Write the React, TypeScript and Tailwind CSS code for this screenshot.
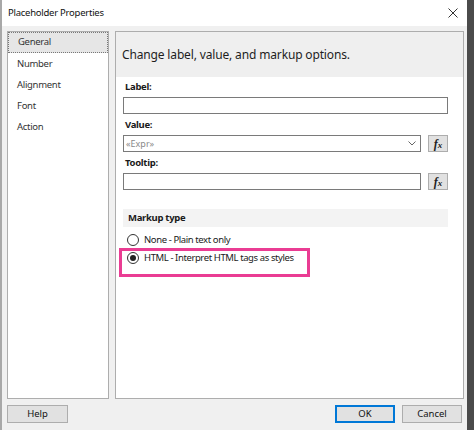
import React from 'react';

const font = { fontFamily: '"Noto Sans", "Open Sans", sans-serif' };

const navItems = ['General', 'Number', 'Alignment', 'Font', 'Action'];

const FxButton: React.FC = () => (
  <button className="ml-[7px] w-[20px] h-[17px] bg-[#e1e1e1] border border-[#adadad] flex items-center justify-center">
    <span className="text-[12px] leading-none italic font-bold text-[#222]" style={{ fontFamily: '"Liberation Serif", serif' }}>
      f<span className="text-[9px]">x</span>
    </span>
  </button>
);

const Radio: React.FC<{ checked?: boolean; label: string }> = ({ checked, label }) => (
  <div className="h-[18px] flex items-center pl-[4px]">
    <span className="w-[12px] h-[12px] rounded-full border border-[#333] bg-white flex items-center justify-center">
      {checked && <span className="w-[6px] h-[6px] rounded-full bg-[#222]" />}
    </span>
    <span className="ml-[5px] text-[9.5px] tracking-[-0.4px] text-[#1a1a1a]">{label}</span>
  </div>
);

const App: React.FC = () => {
  return (
    <div className="w-[474px] h-[430px] flex overflow-hidden" style={font}>
      {/* window frame */}
      <div className="w-[2px] bg-[#a8a8a8]" />
      <div className="flex-1 flex flex-col">
        {/* Title bar */}
        <div className="h-[26px] bg-white flex items-center justify-between pl-[6px] pr-[8px]">
          <span className="text-[9.5px] tracking-[-0.25px] text-[#111]">Placeholder Properties</span>
          <svg width="10" height="10" viewBox="0 0 10 10" className="mr-[1px]">
            <path d="M0.5 0.5 L9.5 9.5 M9.5 0.5 L0.5 9.5" stroke="#333" strokeWidth="1" />
          </svg>
        </div>

        {/* Body */}
        <div className="flex-1 bg-[#f0f0f0] flex flex-col pl-[5px] pr-[3px] pt-[5px]">
          <div className="h-[368px] flex gap-[6px]">
            {/* Left nav */}
            <div className="w-[102px] bg-white border border-[#adadad] flex flex-col">
              {navItems.map((item, i) => (
                <div
                  key={item}
                  className={`h-[21px] flex items-center pl-[9px] text-[9.5px] tracking-[-0.3px] text-[#333] ${
                    i === 0 ? 'h-[20px] bg-[#e6e6e6] border border-dotted border-[#777] pl-[8px] mb-[1px]' : ''
                  }`}
                >
                  {item}
                </div>
              ))}
            </div>

            {/* Right panel */}
            <div className="flex-1 bg-white border border-[#adadad] flex flex-col">
              <div className="h-[45px] bg-[#efefef] flex items-center pl-[6px]">
                <span className="text-[12px] tracking-[-0.15px] text-[#1e1e1e]">Change label, value, and markup options.</span>
              </div>

              <div className="relative pl-[7px] pr-[15px] flex flex-col">
                <div className="mt-[3px] h-[14px] leading-[14px] text-[9.5px] tracking-[-0.3px] font-bold text-[#1a1a1a] pl-[2px]">Label:</div>
                <div className="mt-[3px] h-[17px] border border-[#7a7a7a] bg-white" />

                <div className="mt-[4px] h-[14px] leading-[14px] text-[9.5px] tracking-[-0.3px] font-bold text-[#1a1a1a] pl-[2px]">Value:</div>
                <div className="mt-[3px] flex">
                  <div className="flex-1 h-[17px] border border-[#7a7a7a] bg-white flex items-center justify-between pl-[2px] pr-[4px]">
                    <span className="text-[9px] text-[#8a8a8a]">«Expr»</span>
                    <svg width="8" height="5" viewBox="0 0 8 5">
                      <path d="M0.5 0.5 L4 4 L7.5 0.5" stroke="#666" strokeWidth="1" fill="none" />
                    </svg>
                  </div>
                  <FxButton />
                </div>

                <div className="mt-[4px] h-[14px] leading-[14px] text-[9.5px] tracking-[-0.3px] font-bold text-[#1a1a1a] pl-[2px]">Tooltip:</div>
                <div className="mt-[3px] flex">
                  <div className="flex-1 h-[17px] border border-[#7a7a7a] bg-white" />
                  <FxButton />
                </div>

                <div className="mt-[19px] h-[18px] bg-[#f3f3f3] flex items-center pl-[5px]">
                  <span className="text-[9.5px] tracking-[-0.3px] font-bold text-[#1a1a1a]">Markup type</span>
                </div>

                <div className="mt-[4px] flex flex-col">
                  <Radio label="None - Plain text only" />
                  <Radio checked label="HTML - Interpret HTML tags as styles" />
                </div>

                {/* highlight annotation */}
                <div className="absolute left-[3px] top-[171px] w-[191px] h-[29px] border-[3px] border-[#ea3c93]" />
              </div>
            </div>
          </div>

          {/* Buttons */}
          <div className="mt-[6px] flex items-start">
            <button className="w-[61px] h-[18px] bg-[#e1e1e1] border border-[#adadad] text-[9.5px] text-[#111] flex items-center justify-center">
              Help
            </button>
            <div className="flex-1" />
            <button className="w-[60px] h-[18px] bg-[#e1e1e1] border-2 border-[#0078d7] text-[9.5px] text-[#111] flex items-center justify-center">
              OK
            </button>
            <button className="ml-[7px] w-[60px] h-[18px] bg-[#e1e1e1] border border-[#adadad] text-[9.5px] text-[#111] flex items-center justify-center">
              Cancel
            </button>
            <div className="w-[2px]" />
          </div>
        </div>
      </div>
      <div className="w-[7px] bg-[#4b4b4b]" />
    </div>
  );
};

export default App;
